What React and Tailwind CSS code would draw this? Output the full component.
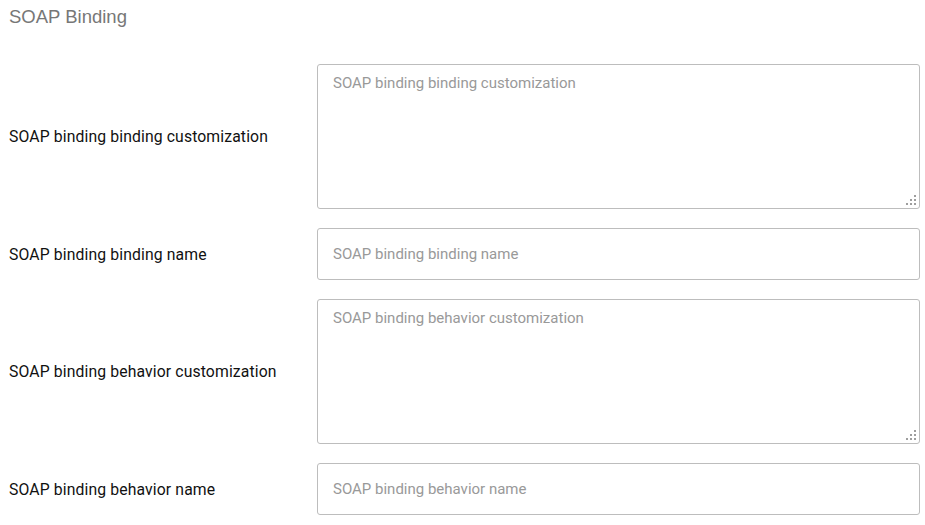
import React from "react";

const fields = [
  { label: "SOAP binding binding customization", multi: true },
  { label: "SOAP binding binding name" },
  { label: "SOAP binding behavior customization", multi: true },
  { label: "SOAP binding behavior name" },
];

export default function App() {
  return (
    <div className="min-h-screen bg-white pl-[9px] pr-[5px]">
      <h2 className="pt-[6px] text-[18.5px] leading-[22px] text-[#777] font-['Liberation_Sans',Arial,sans-serif]">
        SOAP Binding
      </h2>
      <div className="mt-[36px] flex flex-col gap-[19px] font-['Roboto',sans-serif]">
        {fields.map((f) => (
          <Row key={f.label} {...f} />
        ))}
      </div>
    </div>
  );
}

function Grip() {
  return (
    <svg
      aria-hidden
      width="12"
      height="12"
      viewBox="0 0 12 12"
      className="pointer-events-none absolute bottom-[3px] right-[3px]"
    >
      {[
        [9, 1],
        [5, 5],
        [9, 5],
        [1, 9],
        [5, 9],
        [9, 9],
      ].map(([x, y]) => (
        <rect key={`${x}-${y}`} x={x} y={y} width="2" height="2" fill="#9e9e9e" />
      ))}
    </svg>
  );
}

function Row({ label, multi }) {
  const box =
    "w-full rounded-[3px] border border-[#bdbdbd] bg-white px-[15px] text-[15px] text-black placeholder:text-[#999] outline-none";
  return (
    <div className="flex items-center">
      <label className="w-[308px] shrink-0 pt-[1px] text-[15.75px] tracking-[0.12px] text-[#111]">{label}</label>
      {multi ? (
        <div className="relative w-full">
          <textarea
            placeholder={label}
            className={`${box} block h-[145px] resize-none py-[8px] leading-[20px]`}
          />
          <Grip />
        </div>
      ) : (
        <input placeholder={label} className={`${box} h-[52px]`} />
      )}
    </div>
  );
}
